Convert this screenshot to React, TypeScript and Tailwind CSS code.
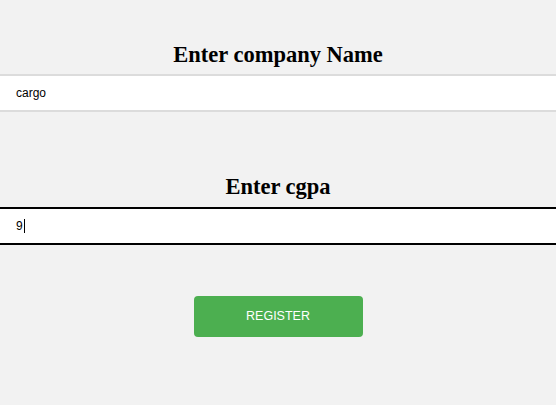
import React from "react";

export default function App() {
  return (
    <div className="min-h-[405px] w-full bg-[#f2f2f2] pt-[40px]" style={{ fontFamily: '"Liberation Sans", Arial, sans-serif' }}>
      <h2 className="text-center text-[22.5px] leading-[29px] font-bold text-black" style={{ fontFamily: '"Liberation Serif", "Times New Roman", serif' }}>
        Enter company Name
      </h2>
      <div className="mt-[5px] h-[38px] w-full border-y-2 border-[#dcdcdc] bg-white flex items-center pl-[16px] text-[12px] text-black">
        cargo
      </div>
      <h2 className="mt-[60px] text-center text-[22.5px] leading-[29px] font-bold text-black" style={{ fontFamily: '"Liberation Serif", "Times New Roman", serif' }}>
        Enter cgpa
      </h2>
      <div className="mt-[6px] h-[38px] w-full border-y-2 border-black bg-white flex items-center pl-[16px] text-[12px] text-black">
        <span>9</span>
        <span className="ml-[1px] inline-block h-[14px] w-px bg-black" />
      </div>
      <div className="mt-[51px] flex justify-center">
        <button className="h-[41px] w-[169px] rounded-[4px] bg-[#4caf50] text-[12.5px] text-white">
          REGISTER
        </button>
      </div>
    </div>
  );
}
